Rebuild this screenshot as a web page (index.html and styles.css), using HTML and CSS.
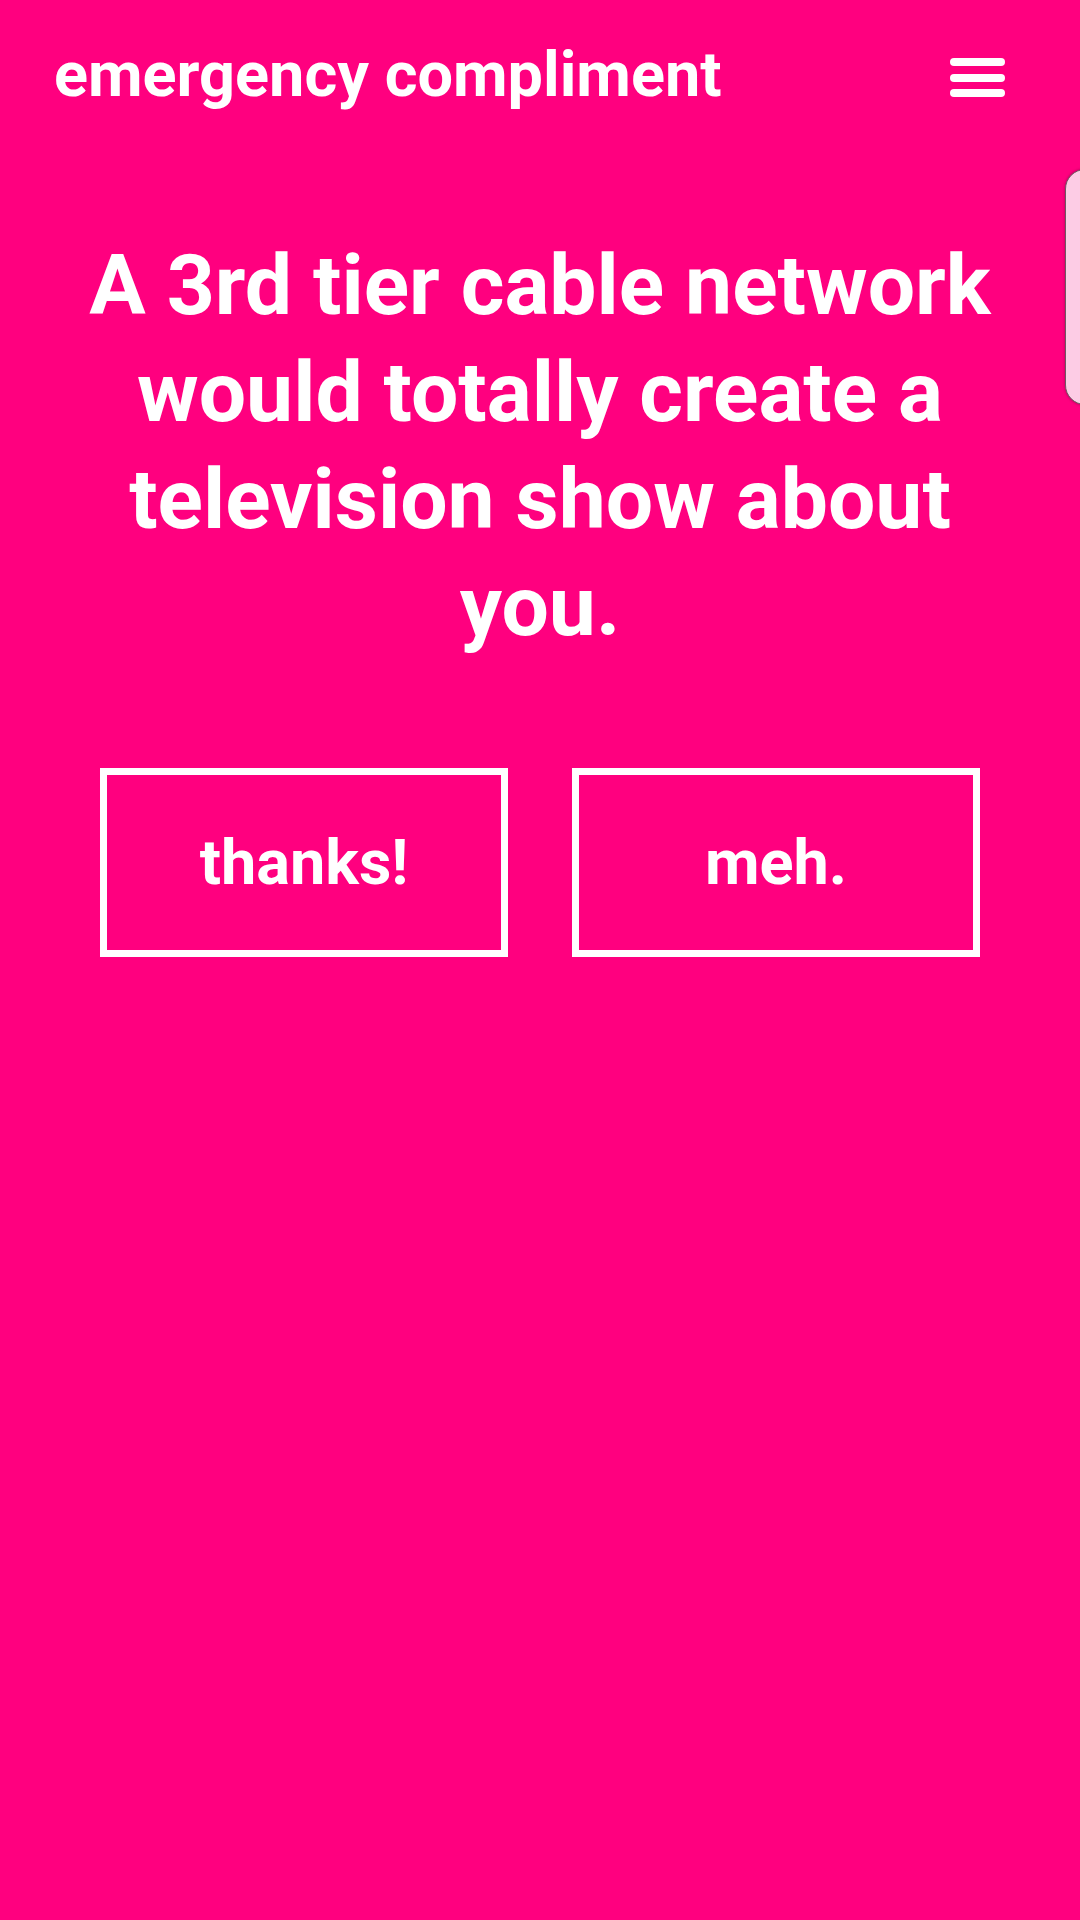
FILE: index.html
```html
<!DOCTYPE html>
<html lang="en">
<head>
    <meta charset="UTF-8">
    <meta name="viewport" content="width=device-width, initial-scale=1.0">
    <link rel="stylesheet" href="styles.css">
</head>
<body>
    <header class="topbar">
        <div class="site-title">emergency compliment</div>
        <div class="menu-icon">
            <div></div>
            <div></div>
            <div></div>
        </div>
    </header>

    <div class="drawer"></div>

    <main class="compliment">
        <h1 class="compliment-text">A 3rd tier cable network would totally create a television show about you.</h1>
        <div class="actions">
            <button class="action">thanks!</button>
            <button class="action">meh.</button>
        </div>
    </main>
</body>
</html>
```
FILE: styles.css
```css
html {
    background-color: #ff007f;
}
body {
    font-family: 'Roboto', 'Liberation Sans', sans-serif;
    margin: 0;
    padding: 0;
    background-color: #ff007f;
    color: #FFFFFF;
    min-height: 100vh;
    overflow: hidden;
    position: relative;
}
.topbar {
    display: flex;
    justify-content: space-between;
    align-items: flex-start;
    padding: 35px 75px 0 54px;
}
.site-title {
    font-size: 63px;
    font-weight: 700;
    line-height: 79px;
}
.menu-icon {
    display: flex;
    flex-direction: column;
    gap: 7.5px;
    margin-top: 23px;
}
.menu-icon div {
    width: 55px;
    height: 8px;
    border-radius: 4px;
    background-color: #FFFFFF;
}
.drawer {
    position: absolute;
    top: 169px;
    left: 1065px;
    width: 300px;
    height: 234px;
    background-color: #fdcce5;
    border: 1px solid #6e5a64;
    border-radius: 20px;
    box-shadow: 0 0 3px rgba(0, 0, 0, 0.35);
}
.compliment {
    padding: 0 50px;
}
.compliment-text {
    margin: 118px 0 0;
    font-size: 84px;
    font-weight: 700;
    line-height: 107px;
    text-align: center;
}
.actions {
    display: flex;
    gap: 64px;
    margin: 108px 50px 0;
}
.action {
    flex: 1;
    height: 189px;
    background: none;
    border: 7px solid #FFFFFF;
    color: #FFFFFF;
    font-family: 'Roboto', 'Liberation Sans', sans-serif;
    font-size: 63px;
    font-weight: 700;
    cursor: pointer;
}
```
